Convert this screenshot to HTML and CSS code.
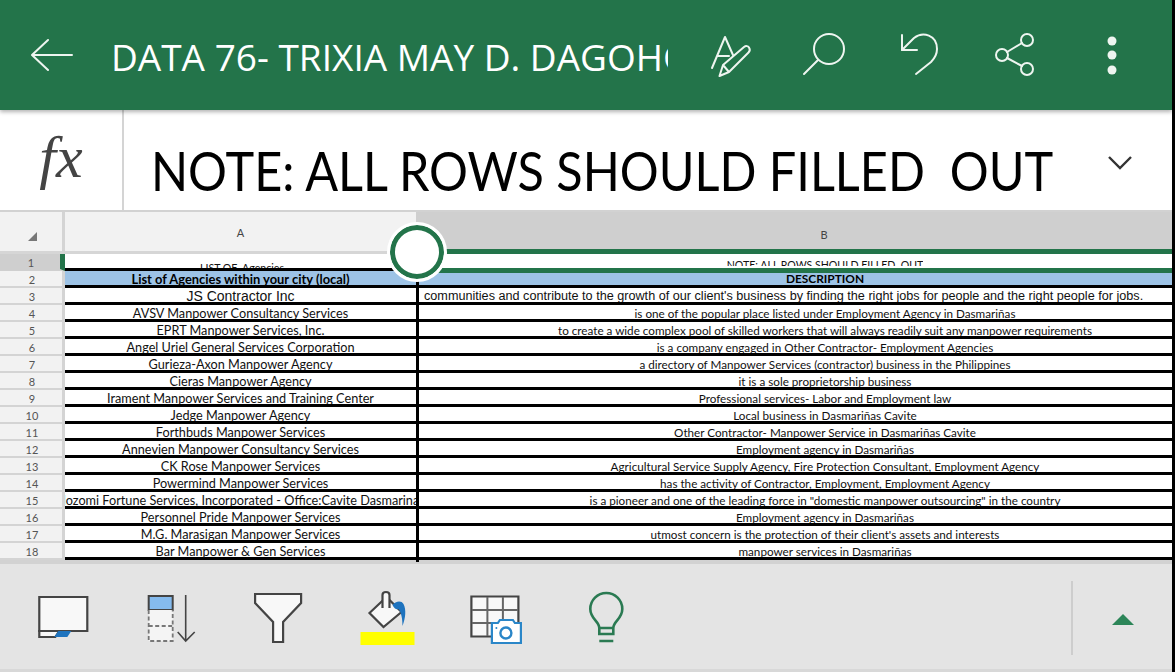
FILE: index.html
```html
<!DOCTYPE html>
<html lang="en">
<head>
<meta charset="utf-8">
<title>DATA 76</title>
<link rel="stylesheet" href="styles.css">
</head>
<body>
<div class="app">
  <header class="topbar">
    <svg class="ico-back" viewBox="31 36 42 42"><path d="M72 57H33M48 42 32 57l16 15"/></svg>
    <div class="doc-title">DATA 76- TRIXIA MAY D. DAGOHOY</div>
    <svg class="ico-top" viewBox="683 10 96 96"><path d="M712 71 725 40l8 18M718 59h11"/><path d="M719.500 79 723 68 744 50c2-1.500 4-1 5 .5s1 3.500-.5 5L729 75ZM723 68l6 7"/></svg>
    <svg class="ico-top" viewBox="779 10 96 96"><circle cx="829" cy="52" r="15"/><path d="M804 77 818 63"/></svg>
    <svg class="ico-top" viewBox="875 10 96 96"><path d="M902 38v15h15"/><path d="M902 53 914 41c9-7 23-3 23 11 0 5-2 9-6 13L916 77"/></svg>
    <svg class="ico-top" viewBox="971 10 96 96"><circle cx="1027" cy="43" r="6"/><circle cx="1002" cy="58" r="6"/><circle cx="1027" cy="72" r="6"/><path d="M1007 55 1022 46M1007 61 1022 69"/></svg>
    <svg class="ico-top ico-solid" viewBox="1067 10 96 96"><circle cx="1112" cy="44" r="4.500"/><circle cx="1112" cy="58" r="4.500"/><circle cx="1112" cy="73" r="4.500"/></svg>
  </header>

  <section class="formula">
    <div class="fx">fx</div>
    <div class="formula-wrap"><div class="formula-text">NOTE: ALL ROWS SHOULD FILLED&nbsp; OUT</div></div>
    <svg class="ico-chev" viewBox="1105 150 30 30"><path d="M1109 158l11 11 11-11"/></svg>
  </section>

  <section class="sheet">
    <div class="row head">
      <div class="rh corner"><span class="tri"></span></div>
      <div class="ch ch-a">A</div>
      <div class="ch ch-b">B</div>
    </div>
    <div class="row first"><div class="rh sel">1</div><div class="a"><span>LIST OF&nbsp; Agencies</span></div><div class="b"><span>NOTE: ALL ROWS SHOULD FILLED&nbsp; OUT</span></div></div>
    <div class="row title"><div class="rh">2</div><div class="a"><span>List of Agencies within your city (local)</span></div><div class="b"><span>DESCRIPTION</span></div></div>
    <div class="row arial"><div class="rh">3</div><div class="a big"><span>JS Contractor Inc</span></div><div class="b"><span>communities and contribute to the growth of our client's business by finding the right jobs for people and the right people for jobs.</span></div></div>
    <div class="row"><div class="rh">4</div><div class="a"><span>AVSV Manpower Consultancy Services</span></div><div class="b"><span>is one of the popular place listed under Employment Agency in Dasmariñas</span></div></div>
    <div class="row"><div class="rh">5</div><div class="a"><span>EPRT Manpower Services, Inc.</span></div><div class="b"><span>to create a wide complex pool of skilled workers that will always readily suit any manpower requirements</span></div></div>
    <div class="row"><div class="rh">6</div><div class="a"><span>Angel Uriel General Services Corporation</span></div><div class="b"><span>is a company engaged in Other Contractor- Employment Agencies</span></div></div>
    <div class="row"><div class="rh">7</div><div class="a"><span>Gurieza-Axon Manpower Agency</span></div><div class="b"><span>a directory of Manpower Services (contractor) business in the Philippines</span></div></div>
    <div class="row"><div class="rh">8</div><div class="a"><span>Cieras Manpower Agency</span></div><div class="b"><span>it is a sole proprietorship business</span></div></div>
    <div class="row"><div class="rh">9</div><div class="a"><span>Irament Manpower Services and Training Center</span></div><div class="b"><span>Professional services- Labor and Employment law</span></div></div>
    <div class="row"><div class="rh">10</div><div class="a"><span>Jedge Manpower Agency</span></div><div class="b"><span>Local business in Dasmariñas Cavite</span></div></div>
    <div class="row"><div class="rh">11</div><div class="a"><span>Forthbuds Manpower Services</span></div><div class="b"><span>Other Contractor- Manpower Service in Dasmariñas Cavite</span></div></div>
    <div class="row"><div class="rh">12</div><div class="a"><span>Annevien Manpower Consultancy Services</span></div><div class="b"><span>Employment agency in Dasmariñas</span></div></div>
    <div class="row"><div class="rh">13</div><div class="a"><span>CK Rose Manpower Services</span></div><div class="b"><span>Agricultural Service Supply Agency, Fire Protection Consultant, Employment Agency</span></div></div>
    <div class="row"><div class="rh">14</div><div class="a"><span>Powermind Manpower Services</span></div><div class="b"><span>has the activity of Contractor, Employment, Employment Agency</span></div></div>
    <div class="row"><div class="rh">15</div><div class="a"><span>Nozomi Fortune Services, Incorporated - Office:Cavite Dasmarinas</span></div><div class="b"><span>is a pioneer and one of the leading force in "domestic manpower outsourcing" in the country</span></div></div>
    <div class="row"><div class="rh">16</div><div class="a"><span>Personnel Pride Manpower Services</span></div><div class="b"><span>Employment agency in Dasmariñas</span></div></div>
    <div class="row"><div class="rh">17</div><div class="a"><span>M.G. Marasigan Manpower Services</span></div><div class="b"><span>utmost concern is the protection of their client's assets and interests</span></div></div>
    <div class="row last"><div class="rh">18</div><div class="a"><span>Bar Manpower &amp; Gen Services</span></div><div class="b"><span>manpower services in Dasmariñas</span></div></div>

    <div class="selection"></div>
    <div class="handle"></div>
  </section>

  <footer class="toolbar">
    <div class="tools">
      <svg class="tool" viewBox="9 580 108 76">
        <path class="fill-w" d="M39 597h48v34H39z"/>
        <path class="fill-w" d="M39 631v6h16l4-6z"/>
        <path class="fill-b" d="M58 631h13l-4 6H54z"/>
      </svg>
      <svg class="tool" viewBox="117.600 580 108 76">
        <rect class="fill-lb" x="148" y="596" width="24" height="14"/>
        <path class="dash" d="M148 610v31h24v-31M148 626h24"/>
        <path class="thin" d="M185 595v46M177 632l8 9 9-9"/>
      </svg>
      <svg class="tool" viewBox="226.200 580 108 76">
        <path class="fill-w" d="M255 594h46v9l-18 19v20h-10v-20l-18-19z"/>
      </svg>
      <svg class="tool" viewBox="334.800 580 108 76">
        <path class="fill-w" d="M369 613 386 597l15 15-18 15z"/>
        <path class="thin2" d="M382 608v-13c0-4 7-4 7 0v13"/>
        <path class="drop" d="M392 605c3-4 9-5 11-1 3 6 2 14-1 22 0-7-1-13-4-17-2 1-4 0-6-4z"/>
        <rect class="yellow" x="360" y="632" width="54" height="13"/>
      </svg>
      <svg class="tool" viewBox="443.400 580 108 76">
        <path class="fill-w" d="M471.500 596.500h47v40h-47z"/>
        <path class="grid" d="M487.500 597v39M503 597v39M472 610h46M472 623h46"/>
        <path class="cam" d="M492 623h6l2-3h13l2 3h6v20h-29z"/>
        <circle class="lens" cx="506" cy="633" r="5.500"/>
        <circle class="dot" cx="496.500" cy="628" r="1"/>
      </svg>
      <svg class="tool" viewBox="552 580 108 76">
        <path class="bulb" d="M599 628c0-7-9-9-9-19a16 16 0 0 1 32 0c0 10-9 12-9 19zM599 628v6h14v-6M599 634h14M599 641h14"/>
      </svg>
    </div>
    <div class="sep"></div>
    <div class="expand"><span class="up"></span></div>
  </footer>
</div>
</body>
</html>
```
FILE: styles.css
```css
* { box-sizing: border-box; }
html, body { margin: 0; padding: 0; }
body { width: 1175px; height: 672px; overflow: hidden; background: #000; }
.app { width: 1172px; height: 672px; display: flex; flex-direction: column; background: #fff; overflow: hidden; }

.topbar { position: relative; z-index: 3; height: 110px; flex: none; display: flex; align-items: center; padding-left: 31px; background: #23744a; box-shadow: 0 2px 4px rgba(0,0,0,.3); }
.topbar svg { fill: none; stroke: #eef5f0; stroke-width: 2; stroke-linecap: round; stroke-linejoin: round; flex: none; }
.ico-back { width: 42px; height: 42px; margin-right: 38px; }
.doc-title { width: 557px; flex: none; overflow: hidden; white-space: nowrap; font: 37px "Open Sans", sans-serif; color: #fff; margin-right: 15px; padding-top: 3px; }
.ico-top { width: 96px; height: 96px; }
.topbar .ico-solid { fill: #eef5f0; stroke: none; }

.formula { height: 102px; flex: none; display: flex; align-items: center; position: relative; border-bottom: 2px solid #d2d2d2; }
.fx { width: 124px; height: 100px; flex: none; border-right: 2px solid #d4d4d4; display: flex; align-items: center; justify-content: center; font: italic 60px "Liberation Serif", serif; color: #444; padding-bottom: 6px; }
.formula-wrap { flex: 1; min-width: 0; padding-left: 27px; padding-top: 20px; overflow: hidden; }
.formula-text { white-space: nowrap; font: 54px "Lato", sans-serif; color: #000; transform: scaleX(.9); transform-origin: left center; }
.ico-chev { width: 30px; height: 30px; flex: none; margin: 8px 37px 0 0; fill: none; stroke: #333; stroke-width: 2.400; }

.sheet { position: relative; height: 348px; flex: none; font: 12.700px "Lato", sans-serif; color: #111; }
.row { display: flex; height: 17px; }
.rh { width: 65px; flex: none; background: #f2f2f2; border-right: 3px solid #d4d4d4; border-bottom: 2px solid #d4d4d4; display: flex; align-items: flex-end; justify-content: center; font-size: 11px; color: #555; padding-left: 2px; line-height: 13px; }
.rh.sel { background: #cfcfcf; border-right: 5px solid #23744a; border-bottom-color: #cfcfcf; }
.a, .b { display: flex; justify-content: center; overflow: hidden; white-space: nowrap; background: #fff; border-bottom: 3px solid #000; line-height: 14px; padding-top: 1px; }
.a span, .b span { flex: none; }
.a { width: 354px; flex: none; border-right: 3px solid #000; }
.b { width: 812px; flex: none; font-size: 11.700px; }

.row.head { height: 42px; }
.head .rh { border-bottom: 3px solid #d6d6d6; position: relative; }
.tri { position: absolute; left: 28px; top: 20px; border-style: solid; border-width: 0 0 9px 9px; border-color: transparent transparent #777 transparent; }
.ch { display: flex; align-items: center; justify-content: center; font-size: 11px; color: #444; border-bottom: 3px solid #d6d6d6; padding-top: 2px; }
.ch-a { width: 351px; flex: none; background: #f2f2f2; }
.ch-b { width: 816px; flex: none; background: #cfcfcf; border-bottom: none; }

.first .a, .first .b { font-size: 10.600px; line-height: 14px; }
.first .a { padding-top: 7px; border-right: none; }
.first .b { padding-top: 4px; }
.first .b span { height: 8px; overflow: hidden; }
.title .a, .title .b { background: #9dc3e6; font-weight: 700; color: #000; padding-top: 1px; }
.title .a { font-size: 12.900px; }
.title .b { font-size: 11.900px; }
.arial .a, .arial .b { font-family: "Liberation Sans", sans-serif; }
.arial .b { font-size: 12.650px; justify-content: flex-start; padding-left: 5px; }
.arial .big { font-size: 14px; }
.last .a { position: relative; overflow: visible; }
.last .a::after { content: ""; position: absolute; right: -3px; bottom: -5px; width: 3px; height: 5px; background: #000; }

.selection { position: absolute; left: 417px; right: 0; top: 37px; height: 24px; border-top: 5px solid #23744a; border-bottom: 5px solid #23744a; }
.handle { position: absolute; left: 387px; top: 10px; width: 60px; height: 60px; border-radius: 50%; background: #fff; border: 3px solid #fff; box-shadow: inset 0 0 0 5px #23744a; z-index: 2; }

.toolbar { height: 112px; flex: none; display: flex; align-items: center; background: #e4e4e4; border-top: 4px solid #d2d2d2; border-bottom: 3px solid #d8d8d8; }
.tools { width: 1071px; flex: none; display: flex; align-items: center; padding-left: 9px; padding-top: 3px; }
.tool { width: 108.600px; height: 76px; flex: none; }
.tool .fill-w { fill: #f8f8f8; stroke: #444; stroke-width: 2.200; }
.tool .fill-b { fill: #1e73be; }
.tool .fill-lb { fill: #85bbee; stroke: #444; stroke-width: 2; }
.tool .dash { fill: #f4f4f4; stroke: #777; stroke-width: 1.800; stroke-dasharray: 4 2.500; }
.tool .thin { fill: none; stroke: #444; stroke-width: 1.600; }
.tool .thin2 { fill: #f8f8f8; stroke: #444; stroke-width: 2.200; }
.tool .drop { fill: #1e73be; }
.tool .yellow { fill: #ff0; }
.tool .grid { fill: none; stroke: #666; stroke-width: 2; }
.tool .cam { fill: #fff; stroke: #2a86c8; stroke-width: 2.200; }
.tool .lens { fill: none; stroke: #2a86c8; stroke-width: 2.400; }
.tool .dot { fill: #2a86c8; }
.tool .bulb { fill: none; stroke: #2a7a52; stroke-width: 2.600; }
.sep { width: 2px; height: 74px; flex: none; background: #cdcdcd; margin-top: 3px; }
.expand { flex: 1; align-self: stretch; display: flex; align-items: center; justify-content: center; padding-top: 6px; }
.up { width: 0; height: 0; border-style: solid; border-width: 0 11px 11px 11px; border-color: transparent transparent #2c8558 transparent; }
```
